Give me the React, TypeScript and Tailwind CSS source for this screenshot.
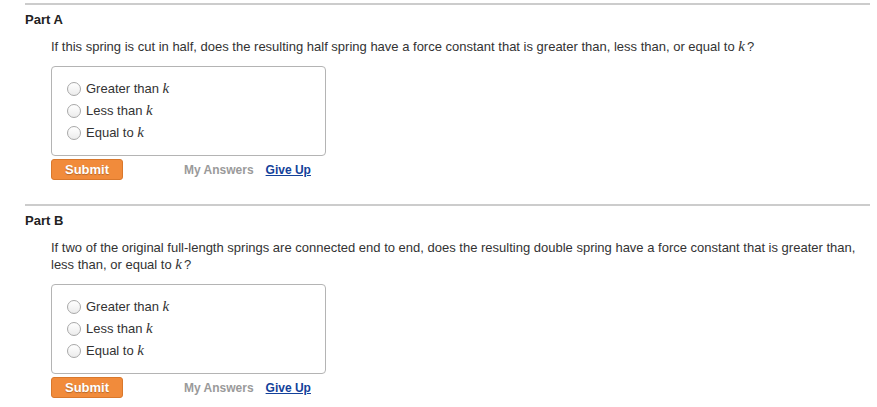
import React from "react";

const K = () => (
  <span className="mr-[2px] italic text-[15px] leading-none" style={{ fontFamily: '"Liberation Serif", serif' }}>
    k
  </span>
);

const Radio = ({ children }: { children: React.ReactNode }) => (
  <label className="flex h-[22px] items-center">
    <span className="h-[14px] w-[14px] rounded-full border border-[#a8a8a8] bg-gradient-to-b from-white to-[#ececec]" />
    <span className="ml-[5px] text-[13px] text-[#333]">{children}</span>
  </label>
);

const Part = ({ title, question, first }: { title: string; question: React.ReactNode; first?: boolean }) => (
  <div className={first ? "mt-[3px] border-t-2 border-[#cccccc]" : "mt-[24px] border-t-2 border-[#cccccc]"}>
    <div className="pt-[7px] text-[13px] font-bold leading-[16px] text-[#222]">{title}</div>
    <div className="pl-[26px]">
      <p className="mt-[10px] pr-[14px] text-[13px] leading-[17px] text-[#333]">{question}</p>
      <div className="mt-[11px] flex h-[90px] w-[275px] flex-col rounded-[4px] border border-[#b4b4b4] pl-[15px] pt-[11px]">
        <Radio>
          Greater than <K />
        </Radio>
        <Radio>
          Less than <K />
        </Radio>
        <Radio>
          Equal to <K />
        </Radio>
      </div>
      <div className="mt-[3px] flex items-center">
        <button className="h-[21px] w-[72px] rounded-[3px] border border-[#d9782c] bg-[#f18b3b] text-[13px] font-bold text-white [text-shadow:0_1px_1px_rgba(0,0,0,0.25)]">
          Submit
        </button>
        <span className="ml-[61px] text-[12px] font-bold text-[#9a9a9a]">My Answers</span>
        <span className="ml-[12px] text-[12px] font-bold text-[#13419a] underline">Give Up</span>
      </div>
    </div>
  </div>
);

export default function App() {
  return (
    <div
      className="h-[407px] w-[877px] overflow-hidden bg-white pl-[25px] pr-[7px]"
      style={{ fontFamily: '"Liberation Sans", Arial, sans-serif' }}
    >
      <Part
        first
        title="Part A"
        question={
          <>
            If this spring is cut in half, does the resulting half spring have a force constant that is greater than, less than, or equal to <K />?
          </>
        }
      />
      <Part
        title="Part B"
        question={
          <>
            If two of the original full-length springs are connected end to end, does the resulting double spring have a force constant that is greater than, less than, or equal to <K />?
          </>
        }
      />
    </div>
  );
}
